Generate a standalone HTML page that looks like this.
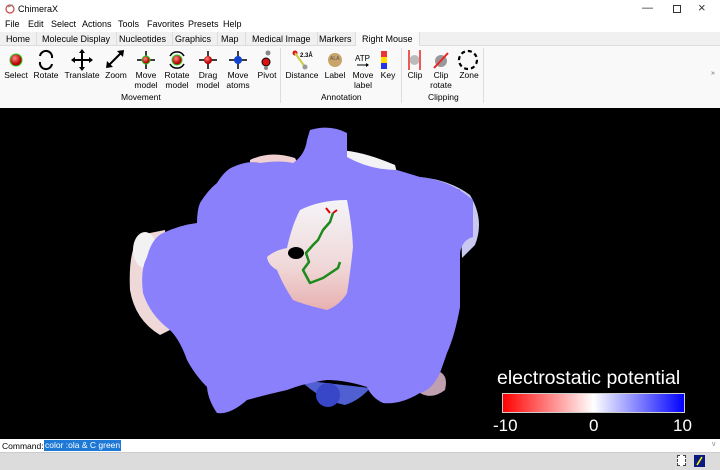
<!DOCTYPE html>
<html><head><meta charset="utf-8"><style>
*{margin:0;padding:0;box-sizing:border-box}
body{width:720px;height:470px;overflow:hidden;font-family:"Liberation Sans",sans-serif;font-size:9px;color:#000;background:#fff;position:relative}
.abs{position:absolute}
.menu span{position:absolute;top:19px;font-size:9px}
.tabs{top:32px;left:0;width:720px;height:14px;background:#f0f0f0;border-bottom:1px solid #ddd}
.tab{position:absolute;top:0;height:14px;line-height:14px;font-size:9px;padding:0 6px;border-right:1px solid #ddd}
.ribbon{top:46px;left:0;width:720px;height:62px;background:#f9f9f9}
.lbl{position:absolute;font-size:8.5px;text-align:center;line-height:10px;width:40px}
.grp{position:absolute;top:92px;font-size:8.5px}
.sep{position:absolute;top:48px;width:1px;height:55px;background:#ddd}
</style></head><body>
<div class="abs" style="left:0;top:0;width:720px;height:18px;background:#fff"></div>
<svg class="abs" style="left:5px;top:3px" width="11" height="11"><circle cx="5" cy="6" r="4" fill="none" stroke="#c44" stroke-width="1.2"/><path d="M3 4 L8 2" stroke="#888"/></svg>
<div class="abs" style="left:18px;top:4px;font-size:9px">ChimeraX</div>
<div class="abs" style="left:642px;top:2px;font-size:11px;color:#333">—</div>
<div class="abs" style="left:673px;top:5px;width:8px;height:8px;border:1px solid #333;background:#fff"></div>
<div class="abs" style="left:698px;top:0px;font-size:13px;color:#333;background:#fff;width:20px">×</div>
<div class="menu">
<span style="left:5px">File</span><span style="left:28px">Edit</span><span style="left:51px">Select</span><span style="left:82px">Actions</span><span style="left:118px">Tools</span><span style="left:147px">Favorites</span><span style="left:188px">Presets</span><span style="left:223px">Help</span>
</div>
<div class="abs tabs">
<div class="tab" style="left:0">Home</div>
<div class="tab" style="left:36px">Molecule Display</div>
<div class="tab" style="left:113px">Nucleotides</div>
<div class="tab" style="left:169px">Graphics</div>
<div class="tab" style="left:215px">Map</div>
<div class="tab" style="left:246px">Medical Image</div>
<div class="tab" style="left:313px">Markers</div>
<div class="tab" style="left:355px;background:#f9f9f9;height:15px;border-left:1px solid #ddd">Right Mouse</div>
</div>
<div class="abs ribbon"></div>
<svg class="abs" style="left:0;top:48px" width="720" height="30">
<defs><radialGradient id="rb" cx="40%" cy="35%"><stop offset="0" stop-color="#f88"/><stop offset="1" stop-color="#b00"/></radialGradient></defs>
<circle cx="16" cy="12" r="6" fill="url(#rb)" stroke="#2c2" stroke-width="1"/>
<path d="M40 8 A6 6 0 0 1 52 10 M52 16 A6 6 0 0 1 40 14" fill="none" stroke="#000" stroke-width="2"/>
<path d="M82 3 V21 M73 12 H91" stroke="#000" stroke-width="2"/><path d="M82 1 l-3 4 h6z M82 23 l-3 -4 h6z M71 12 l4 -3 v6z M93 12 l-4 -3 v6z"/>
<path d="M108 18 L122 4" stroke="#000" stroke-width="2"/><path d="M124 2 l-7 1 l6 6z M106 20 l1 -7 l6 6z"/>
<path d="M146 3 V21 M137 12 H155" stroke="#000" stroke-width="1.5"/><circle cx="146" cy="12" r="4" fill="url(#rb)" stroke="#2c2"/>
<circle cx="177" cy="12" r="5" fill="url(#rb)" stroke="#2c2"/><path d="M170 8 A8 8 0 0 1 184 8 M184 16 A8 8 0 0 1 170 16" fill="none" stroke="#000" stroke-width="1.5"/>
<path d="M208 3 V21 M199 12 H217" stroke="#000" stroke-width="1.5"/><circle cx="208" cy="12" r="4" fill="url(#rb)"/>
<path d="M238 3 V21 M229 12 H247" stroke="#000" stroke-width="1.5"/><circle cx="238" cy="12" r="4" fill="#14c"/>
<circle cx="268" cy="5" r="2.5" fill="#888"/><circle cx="266" cy="14" r="4" fill="#d11" stroke="#000"/><circle cx="266" cy="20" r="2" fill="#888"/>
<circle cx="295" cy="5" r="2.5" fill="#d11"/><path d="M295 5 L305 19" stroke="#cc4" stroke-width="2"/><circle cx="305" cy="19" r="2.5" fill="#999"/><text x="300" y="9" font-size="6" font-weight="bold" font-family="Liberation Sans">2.3Å</text>
<circle cx="335" cy="12" r="7" fill="#c9a36a"/><text x="330" y="12" font-size="5" fill="#555" font-family="Liberation Sans">ALA</text>
<text x="355" y="13" font-size="8" font-family="Liberation Sans">ATP</text><path d="M357 17 H367" stroke="#000"/><path d="M369 17 l-3 -2 v4z"/>
<rect x="381" y="3" width="6" height="18" fill="#e33"/><rect x="381" y="9" width="6" height="6" fill="#fd0"/><rect x="381" y="15" width="6" height="6" fill="#23e"/>
<path d="M409 2 V22 M420 2 V22" stroke="#e22" stroke-width="1.5"/><circle cx="414.5" cy="12" r="5" fill="#bbb"/>
<circle cx="441" cy="13" r="6" fill="#999"/><path d="M434 20 L448 5" stroke="#e22" stroke-width="2"/>
<circle cx="468" cy="12" r="9" fill="none" stroke="#000" stroke-width="2.2" stroke-dasharray="4 3"/>
</svg>
<div class="lbl" style="left:-4px;top:70px">Select</div>
<div class="lbl" style="left:26px;top:70px">Rotate</div>
<div class="lbl" style="left:62px;top:70px">Translate</div>
<div class="lbl" style="left:96px;top:70px">Zoom</div>
<div class="lbl" style="left:126px;top:70px">Move<br>model</div>
<div class="lbl" style="left:157px;top:70px">Rotate<br>model</div>
<div class="lbl" style="left:188px;top:70px">Drag<br>model</div>
<div class="lbl" style="left:218px;top:70px">Move<br>atoms</div>
<div class="lbl" style="left:247px;top:70px">Pivot</div>
<div class="lbl" style="left:282px;top:70px">Distance</div>
<div class="lbl" style="left:315px;top:70px">Label</div>
<div class="lbl" style="left:343px;top:70px">Move<br>label</div>
<div class="lbl" style="left:368px;top:70px">Key</div>
<div class="lbl" style="left:395px;top:70px">Clip</div>
<div class="lbl" style="left:421px;top:70px">Clip<br>rotate</div>
<div class="lbl" style="left:449px;top:70px">Zone</div>
<div class="grp" style="left:121px">Movement</div>
<div class="grp" style="left:321px">Annotation</div>
<div class="grp" style="left:428px">Clipping</div>
<div class="sep" style="left:280px"></div><div class="sep" style="left:401px"></div><div class="sep" style="left:483px"></div>
<div class="abs" style="left:711px;top:70px;font-size:7px;color:#666">»</div>
<div class="abs" style="left:0;top:108px;width:720px;height:331px;background:#000"></div>
<svg class="abs" style="left:0;top:108px" width="720" height="331" viewBox="0 108 720 331">
<defs>
<linearGradient id="lg" x1="0" x2="1"><stop offset="0" stop-color="#f00"/><stop offset=".5" stop-color="#fff"/><stop offset="1" stop-color="#00f"/></linearGradient>
<linearGradient id="hole" x1="0" y1="0" x2="0" y2="1"><stop offset="0" stop-color="#f4f4f8"/><stop offset=".6" stop-color="#f0d8d8"/><stop offset="1" stop-color="#e8b0b0"/></linearGradient>
</defs>
<path d="M140 235 Q128 250 130 290 Q135 320 160 335 L170 330 L165 230 Z" fill="#efd8d8"/>
<ellipse cx="145" cy="250" rx="12" ry="18" fill="#f2f2f2"/>
<path d="M250 160 Q270 150 295 158 L300 168 L250 170Z" fill="#f0d0d0"/>
<path d="M335 150 Q360 150 395 165 L400 185 L335 190Z" fill="#f3f3f5"/>
<path d="M420 177 Q450 180 470 195 Q485 220 475 245 L462 258 L460 190Z" fill="#c8c8f0"/>
<circle cx="444" cy="248" r="11" fill="#d8d8f6"/>
<path d="M300 380 Q320 400 345 405 Q360 400 370 388Z" fill="#5060d0"/>
<path d="M430 370 Q450 370 445 390 Q432 400 420 393Z" fill="#c0a0b0"/>
<circle cx="328" cy="395" r="12" fill="#3846c8"/>
<path d="M310 130 Q330 124 347 133 L347 157 Q370 170 397 170 L420 177 Q450 180 473 200 L473 237 Q462 240 460 253 L460 307 Q455 335 447 353 L440 373 Q432 390 420 393 Q400 405 383 403 Q372 398 367 387 Q345 380 327 380 Q305 383 287 390 Q265 395 247 400 Q230 415 217 413 Q208 400 207 387 Q195 375 187 360 Q180 340 170 330 Q150 315 143 293 Q140 270 147 257 Q152 238 163 233 Q180 225 197 223 Q197 210 200 203 Q208 190 217 183 Q225 170 233 167 Q248 160 260 163 Q280 160 293 163 Q305 155 307 140 Z" fill="#8b80fb"/>
<path d="M267 257 Q275 250 287 248 Q292 225 300 210 Q320 200 347 200 Q352 225 353 247 Q350 275 347 293 Q340 305 327 310 Q305 305 293 300 Q283 285 277 270 Q268 265 267 257Z" fill="url(#hole)"/>
<ellipse cx="296" cy="253" rx="8" ry="6" fill="#000"/>
<path d="M333 213 L330 222 L323 230 L318 240 L313 245 L306 253 L309 262 L303 270 L310 283 L323 278 L338 268 L340 262" fill="none" stroke="#1c8a1c" stroke-width="2.5" stroke-linejoin="round"/>
<path d="M330 213 L326 208 M333 213 L337 210" stroke="#d00" stroke-width="2"/>
<text x="497" y="384" font-family="Liberation Sans" font-size="19.5" fill="#fff">electrostatic potential</text>
<rect x="502.5" y="393.5" width="182" height="19" fill="url(#lg)" stroke="#ccc"/>
<text x="493" y="431" font-family="Liberation Sans" font-size="17" fill="#fff">-10</text>
<text x="589" y="431" font-family="Liberation Sans" font-size="17" fill="#fff">0</text>
<text x="673" y="431" font-family="Liberation Sans" font-size="17" fill="#fff">10</text>
</svg>
<div class="abs" style="left:0;top:439px;width:720px;height:14px;background:#fff;border-bottom:1px solid #ccc"></div>
<div class="abs" style="left:2px;top:441px;font-size:8.5px">Command:</div>
<div class="abs" style="left:44px;top:440px;height:11px;padding:0 1px;background:#1e78d6;color:#fff;font-size:8.5px;line-height:11px">color :ola &amp; C green</div>
<div class="abs" style="left:712px;top:441px;font-size:7px;color:#888">v</div>
<div class="abs" style="left:0;top:453px;width:720px;height:17px;background:#dcdcdc"></div>
<div class="abs" style="left:677px;top:455px;width:9px;height:11px;border:1px dashed #444;background:#fff"></div>
<div class="abs" style="left:694px;top:455px;width:11px;height:12px;background:#0a1a80"><svg width="11" height="12"><path d="M8 2 L3 10" stroke="#ff0" stroke-width="1.5"/></svg></div>
</body></html>
